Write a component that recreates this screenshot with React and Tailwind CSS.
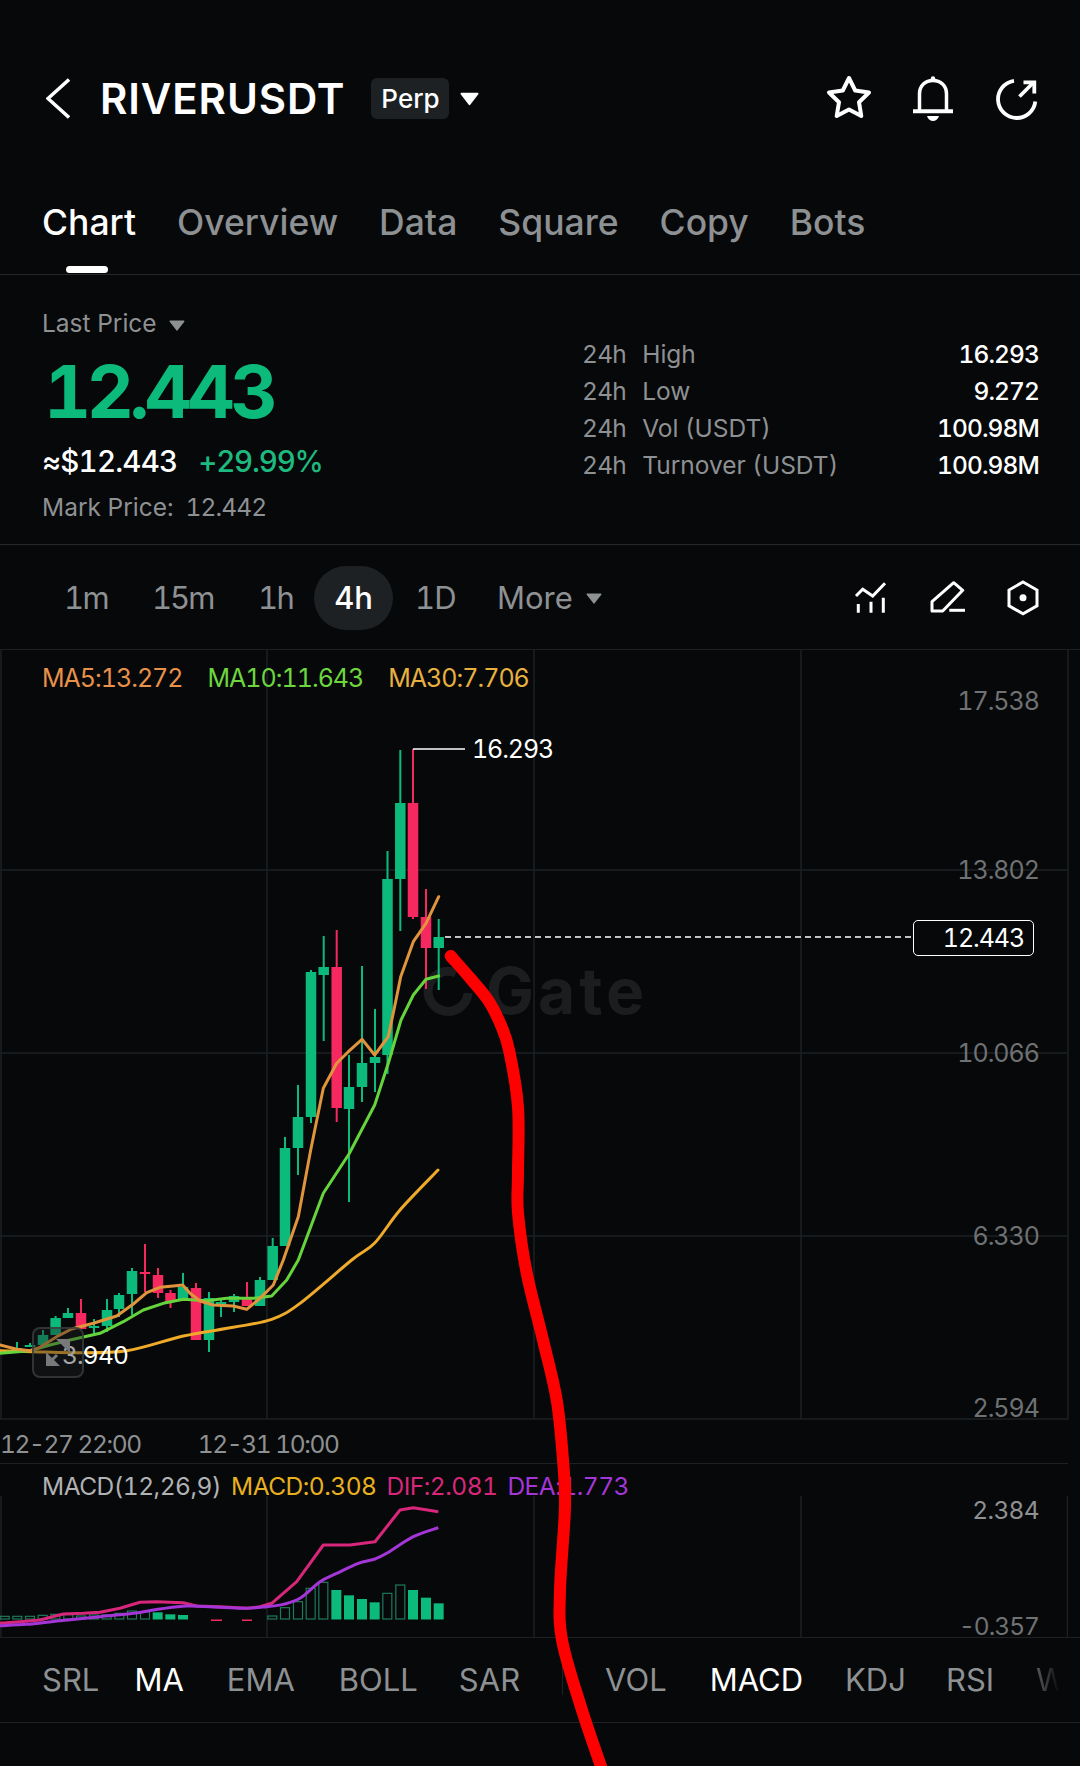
import React from "react";

const GREEN = "#0cbb7c";
const RED = "#f5285f";

// [x, wickTop, wickBottom, bodyTop, bodyBottom, color]
const candles = [
  [438.7, 919, 990, 937, 948, "g"], [426, 889, 989, 917, 948, "r"], [413, 749, 919, 803, 917, "r"],
  [400.3, 750, 931, 803, 879, "g"], [387.5, 851, 1074, 879, 1055, "g"], [375, 1009, 1092, 1057, 1063, "g"],
  [362, 966, 1102, 1063, 1087, "g"], [349, 1055, 1202, 1087, 1109, "g"], [336.7, 930, 1122, 967, 1108, "r"],
  [323.7, 936, 1041, 967, 975, "g"], [311, 970, 1123, 972, 1117, "g"], [298, 1085, 1175, 1117, 1148, "g"],
  [285, 1137, 1246, 1148, 1246, "g"], [272.7, 1238, 1280, 1246, 1280, "g"], [260, 1277, 1306, 1280, 1306, "g"],
  [247, 1282, 1306, 1298, 1306, "r"], [234, 1294, 1312, 1296, 1302, "g"], [221, 1300, 1317, 1302, 1305, "g"],
  [209, 1292, 1352, 1298, 1340, "g"], [196, 1283, 1340, 1288, 1340, "r"], [183, 1273, 1300, 1287, 1300, "g"],
  [170.5, 1290, 1308, 1293, 1302, "r"], [158, 1268, 1298, 1275, 1293, "r"], [145, 1244, 1292, 1272, 1274, "r"],
  [132, 1268, 1315, 1271, 1294, "g"], [119, 1293, 1317, 1295, 1309, "g"], [107, 1299, 1332, 1310, 1326, "g"],
  [94, 1319, 1334, 1326, 1328, "g"], [81, 1299, 1329, 1313, 1329, "r"], [68, 1308, 1318, 1313, 1318, "g"],
  [55.6, 1316, 1335, 1318, 1335, "g"], [43, 1330, 1345, 1335, 1345, "g"], [30, 1343, 1347, 1345, 1347, "g"],
  [17, 1342, 1352, 1348, 1350, "g"],
];

const pts6 = (a) => a.map(([x, y]) => [x / 3, 1230 + y / 3]);
const pts5 = (a) => a.map(([x, y]) => [240 + x / 3, 1000 + y / 3]);
const pts4 = (a) => a.map(([x, y]) => [300 + x / 3, 720 + y / 3]);
const toStr = (a) => a.map(([x, y]) => `${x.toFixed(1)},${y.toFixed(1)}`).join(" ");

const smooth = (p) => {
  let d = `M${p[0][0]} ${p[0][1]}`;
  for (let i = 0; i < p.length - 1; i++) {
    const a = p[Math.max(i - 1, 0)], b = p[i], c = p[i + 1], e = p[Math.min(i + 2, p.length - 1)];
    d += ` C${(b[0] + (c[0] - a[0]) / 6).toFixed(1)} ${(b[1] + (c[1] - a[1]) / 6).toFixed(1)} ${(c[0] - (e[0] - b[0]) / 6).toFixed(1)} ${(c[1] - (e[1] - b[1]) / 6).toFixed(1)} ${c[0]} ${c[1]}`;
  }
  return d;
};

const ma5 = [
  ...pts6([[0, 345], [50, 358], [90, 362], [120, 352], [170, 320], [215, 297], [280, 280], [350, 258], [400, 222], [440, 188], [480, 172], [520, 168], [548, 165], [570, 190], [600, 213], [640, 225], [700, 228], [740, 238], [780, 205], [820, 165]]),
  ...pts5([[130, 780], [175, 650], [212, 450], [250, 265], [290, 190], [325, 155], [366, 118], [404, 165], [445, 110], [468, 0]]),
  ...pts4([[302, 770], [340, 665], [378, 610], [416, 530]]),
];
const ma10 = [
  ...pts6([[0, 370], [90, 362], [150, 345], [210, 330], [300, 310], [370, 275], [430, 240], [490, 220], [550, 208], [620, 212], [680, 205], [760, 205], [815, 198], [860, 150]]),
  ...pts5([[175, 780], [250, 580], [327, 462], [404, 315], [445, 190], [483, 60]]),
  ...pts4([[340, 825], [378, 778], [416, 768]]),
];
const ma30 = [
  ...pts6([[0, 362], [100, 365], [220, 368], [380, 362], [550, 318], [700, 292], [815, 268], [900, 220]]),
  [351.7, 1260], [374.7, 1243], [400, 1210], [438, 1170],
];

const macdBars = [
  [1316, 490, 1], [1278, 473, 1], [1239, 450, 1], [1201, 435, 0], [1162, 460, 0], [1124, 487, 1], [1086, 477, 1], [1047, 466, 1], [1009, 450, 1],
  [970, 427, 0], [932, 445, 0], [894, 485, 0], [855, 503, 0], [817, 528, 0], [549, 525, 1], [511, 523, 1], [473, 517, 1], [435, 515, 0], [396, 513, 0],
  [358, 520, 0], [320, 525, 0], [282, 525, 0], [243, 528, 0], [205, 524, 0], [166, 523, 0], [128, 526, 0], [90, 529, 0], [52, 529, 0], [14, 529, 0],
];
const dif = [[0, 550], [60, 545], [120, 540], [190, 522], [250, 520], [300, 517], [360, 505], [420, 487], [470, 485], [550, 488], [590, 498], [660, 500], [740, 505], [780, 500], [815, 490], [890, 425], [930, 370], [970, 315], [1050, 315], [1125, 305], [1200, 210], [1240, 203], [1315, 215]];
const dea = [[0, 557], [80, 553], [180, 542], [300, 530], [400, 520], [480, 507], [560, 498], [660, 502], [740, 505], [800, 500], [850, 493], [900, 475], [960, 425], [1010, 400], [1075, 370], [1125, 357], [1160, 340], [1240, 290], [1315, 263]];
const z7 = (a) => a.map(([x, y]) => [x / 3, 1440 + y / 3]);

const redPath = [[450.7, 956], [470, 978], [488, 1000], [500, 1023], [509, 1050], [518, 1107], [518, 1173], [518, 1213], [526.7, 1273], [543, 1340], [556.7, 1400], [563, 1460], [565, 1507], [560, 1590], [562, 1640], [581, 1707], [603, 1772]];

const Tri = ({ w, h, color, className = "" }) => (
  <svg width={w} height={h} viewBox="0 0 20 14" className={className}>
    <path d="M1.5 1.5H18.500L10 12.500Z" fill={color} stroke={color} strokeWidth="2" strokeLinejoin="round" />
  </svg>
);

const HeaderIcons = () => (
  <div className="flex items-center">
    <svg width="48" height="48" viewBox="824.500 77 48 48" fill="none" stroke="#fff" strokeWidth="4" strokeLinejoin="round">
      <path d="M848.500 80L854.700 92.500L868.500 94.500L858.500 104.200L860.800 118L848.500 111.500L836.200 118L838.500 104.200L828.500 94.500L842.300 92.500Z" />
    </svg>
    <svg width="44" height="48" viewBox="910.500 75 44 48" fill="none" stroke="#fff" className="ml-[38px]">
      <path d="M919 111V94C919 85.500 925 80.500 932.500 80.500C940 80.500 946 85.500 946 94V111" strokeWidth="3.500" />
      <path d="M912.500 111.300H952.500" strokeWidth="4" />
      <circle cx="932.500" cy="78.500" r="2.200" fill="#fff" stroke="none" />
      <path d="M926.500 116H938.500C937.500 119.500 935 121 932.500 121C930 121 927.500 119.500 926.500 116Z" fill="#fff" stroke="none" />
    </svg>
    <svg width="44" height="48" viewBox="996 75 44 48" fill="none" stroke="#fff" strokeWidth="3.800" className="ml-[41px]">
      <path d="M1035.300 101.500A18.700 18.700 0 1 1 1014 80.800" />
      <path d="M1019.500 96.500L1033 83" />
      <path d="M1023.500 82.300H1034.300V93.500" />
    </svg>
  </div>
);

const ToolIcons = () => (
  <div className="flex items-center">
    <svg width="34" height="34" viewBox="853 581 34 34" fill="none" stroke="#fff" strokeWidth="3">
      <path d="M855 596L861.700 589.300L871.700 596L884 583.300" />
      <path d="M857.300 604V612.700M870 601.700V612.700M882.300 597.700V612.700" />
    </svg>
    <svg width="36" height="34" viewBox="929 580 36 34" fill="none" stroke="#fff" strokeWidth="3" strokeLinejoin="round" className="ml-[42px]">
      <path d="M952.700 581.700L961.700 589.300L941.700 610H931V600.700Z" />
      <path d="M948.300 609.300H964" />
    </svg>
    <svg width="34" height="36" viewBox="1005 579.500 34 36" fill="none" stroke="#fff" strokeWidth="3" className="ml-[40px]">
      <path d="M1022 581.500L1036 589.500V605.300L1022 613.300L1008 605.300V589.500Z" />
      <circle cx="1022" cy="597.300" r="3.500" fill="#fff" stroke="none" />
    </svg>
  </div>
);

const stats = [
  ["High", "16.293"], ["Low", "9.272"], ["Vol (USDT)", "100.98M"], ["Turnover (USDT)", "100.98M"],
];
const yLabels = [
  ["17.538", "top-[35px]"], ["13.802", "top-[204px]"], ["10.066", "top-[387px]"], ["6.330", "top-[570px]"], ["2.594", "top-[742px]"],
];

export default function App() {
  return (
    <div className="relative w-[1080px] h-[1766px] overflow-hidden bg-[#060809] text-white tabular-nums font-['Inter','Liberation_Sans',sans-serif]">
      {/* Header */}
      <header className="h-[176px] pt-[78px] pl-[46px] pr-[40px] flex items-start justify-between">
        <div className="flex items-center h-[41px]">
          <svg width="24" height="42" viewBox="45 78 24 42" fill="none" stroke="#fff" strokeWidth="3.500">
            <path d="M68 79.500L47 98.500L68 117.500" />
          </svg>
          <span className="ml-[30px] text-[42px] leading-none font-semibold tracking-[0.9px]">RIVERUSDT</span>
          <span className="ml-[26px] h-[41px] w-[78px] rounded-[6px] bg-[#1e2123] flex items-center justify-center text-[26px] font-medium">Perp</span>
          <Tri w={19} h={14} color="#fff" className="ml-[11px]" />
        </div>
        <div className="-mt-[3px]"><HeaderIcons /></div>
      </header>

      {/* Tabs */}
      <nav className="h-[99px] border-b border-[#25282a] pl-[42px] flex items-start gap-[41px] pt-[24px] text-[35.500px] leading-[46px] font-medium text-[#8e9193]">
        <span className="relative text-white">
          Chart
          <span className="absolute left-[24px] top-[66px] w-[42px] h-[7px] rounded-full bg-white"></span>
        </span>
        <span>Overview</span>
        <span>Data</span>
        <span>Square</span>
        <span>Copy</span>
        <span>Bots</span>
      </nav>

      {/* Price panel */}
      <section className="h-[270px] border-b border-[#25282a] pl-[42px] pr-[41px] flex justify-between">
        <div className="pt-[32px]">
          <div className="flex items-center text-[24.500px] leading-[32px] text-[#8e9193]">
            Last Price
            <Tri w={16} h={11} color="#8e9193" className="ml-[12px] mt-[5px]" />
          </div>
          <div className="mt-[15px] ml-[2px] text-[73px] leading-[76px] font-bold tracking-[-4.400px] text-[#0cbb7c]">12.443</div>
          <div className="mt-[12px] flex items-baseline gap-[21px] text-[29.500px] leading-[38px] font-medium">
            <span className="tracking-[-0.8px]">≈$12.443</span>
            <span className="text-[#1eb97f] tracking-[-1.200px]">+29.99%</span>
          </div>
          <div className="mt-[11px] text-[24.500px] leading-[32px] text-[#8e9193]">
            Mark Price:<span className="ml-[12px] tracking-[-0.9px]">12.442</span>
          </div>
        </div>
        <div className="w-[457px] pt-[61px] text-[24.500px] leading-[37px]">
          {stats.map(([k, v]) => (
            <div key={k} className="flex justify-between">
              <span className="text-[#8e9193]"><span className="tracking-[-0.7px]">24h</span><span className="ml-[16px]">{k}</span></span>
              <span className="font-medium tracking-[-0.9px]">{v}</span>
            </div>
          ))}
        </div>
      </section>

      {/* Timeframe bar */}
      <section className="h-[105px] border-b border-[#1e2123] pl-[64px] pr-[40px] pt-[2px] flex items-center justify-between">
        <div className="flex items-center text-[31px] text-[#8e9193]">
          <span className="w-[44px] text-center tracking-[-1.500px]">1m</span>
          <span className="ml-[44px] w-[61px] text-center tracking-[-2px]">15m</span>
          <span className="ml-[45px] w-[34px] text-center tracking-[-1.500px]">1h</span>
          <span className="ml-[22px] w-[79px] h-[64px] rounded-full bg-[#1e2123] text-white font-medium flex items-center justify-center">4h</span>
          <span className="ml-[22px] w-[39px] text-center tracking-[-0.8px]">1D</span>
          <span className="ml-[43px]">More</span>
          <Tri w={16} h={11} color="#8e9193" className="ml-[13px]" />
        </div>
        <ToolIcons />
      </section>

      {/* Main chart */}
      <section className="relative h-[813px]">
        <div className="absolute left-[42px] right-0 top-[12px] flex gap-[25px] text-[25px] leading-[32px] tracking-[-1px]">
          <span className="text-[#e8914a]">MA5:13.272</span>
          <span className="text-[#6cd63f]">MA10:11.643</span>
          <span className="text-[#e8b040]">MA30:7.706</span>
        </div>
        <svg width="1080" height="813" viewBox="0 650 1080 813" className="block">
          <g stroke="#1e2123" strokeWidth="1.500">
            <path d="M0 870H1068M0 1053H1068M0 1236H1068M0 1419H1068" />
            <path d="M1 650V1419M267 650V1419M534 650V1419M801 650V1419M1068 650V1419" />
          </g>
          <path d="M456 973A20 20 0 1 0 468 993" fill="none" stroke="#1b1d1f" strokeWidth="9" />
          <text x="486" y="1014" fontSize="64" fontWeight="700" letterSpacing="4" fill="#1b1d1f" fontFamily="Inter">Gate</text>
          {candles.map(([x, t, b, bt, bb, c], i) => {
            const col = c === "g" ? GREEN : RED;
            return (
              <g key={i} fill={col}>
                <rect x={x - 1} y={t} width="2" height={b - t} />
                <rect x={x - 5.250} y={bt} width="10.500" height={bb - bt} />
              </g>
            );
          })}
          <g fill="none" strokeWidth="3" strokeLinejoin="round" strokeLinecap="round">
            <path d={smooth(ma30)} stroke="#efaa2a" />
            <polyline points={toStr(ma10)} stroke="#66d43c" />
            <polyline points={toStr(ma5)} stroke="#e0943c" />
          </g>
          <path d="M413 749H465" stroke="#fff" strokeWidth="1.500" fill="none" />
          <path d="M445 937H912" stroke="#fff" strokeWidth="1.500" strokeDasharray="6 4" fill="none" />
        </svg>

        {/* Overlaid labels */}
        <span className="absolute left-[472px] top-[83px] text-[25px] leading-[32px] tracking-[-1.100px]">16.293</span>
        <span className="absolute left-[62px] top-[689px] text-[24.500px] leading-[32px] tracking-[-0.8px]">3.940</span>
        {yLabels.map(([t, top]) => (
          <span key={t} className={`absolute right-[41px] ${top} text-[25px] leading-[32px] tracking-[-1px] text-[#6f7274]`}>{t}</span>
        ))}
        <span className="absolute left-[913px] top-[270px] w-[121px] h-[36px] rounded-[5px] border border-white bg-[#060809] text-[25px] tracking-[-1.100px] flex items-center justify-end pr-[9px]"><span className="relative top-[1px]">12.443</span></span>
        <div className="absolute left-[32px] top-[677px] w-[52px] h-[51px] rounded-[8px] border-[2px] border-[#3a3d3f]/80 bg-[#1e2123]/40 flex items-center justify-center">
          <svg width="36" height="36" viewBox="0 0 36 36" fill="none">
            <path d="M6 31V17L11 22L16 27L20 31Z" fill="#77797b" />
            <path d="M10 27L17 20" stroke="#77797b" strokeWidth="3" />
            <path d="M30 4H16L30 18Z" fill="#77797b" />
          </svg>
        </div>
        <div className="absolute left-0 top-[778px] w-[1068px] flex text-[24.500px] leading-[32px] tracking-[-1.400px] text-[#8e9193]">
          <span>12-27 22:00</span>
          <span className="ml-[57px]">12-31 10:00</span>
        </div>
      </section>

      {/* MACD */}
      <section className="relative h-[174px] border-t border-[#1e2123] w-[1068px]">
        <div className="absolute left-[42px] top-[6px] flex gap-[10px] text-[24.500px] leading-[32px] tracking-[-0.5px]">
          <span className="text-[#b0b2b4]">MACD(12,26,9)</span>
          <span className="text-[#e8b020]">MACD:0.308</span>
          <span className="text-[#d8277a]">DIF:2.081</span>
          <span className="text-[#a436d8]">DEA:1.773</span>
        </div>
        <svg width="1068" height="173" viewBox="0 1464 1068 173" className="block">
          <path d="M1 1496V1637M267 1496V1637M534 1496V1637M801 1496V1637M1067.500 1496V1637" stroke="#1e2123" strokeWidth="1.500" />
          {macdBars.map(([zx, top, filled], i) => {
            const x = zx / 3, y = 1440 + top / 3;
            return filled ? (
              <rect key={i} x={x - 5} y={y} width="10" height={1619.500 - y} fill={GREEN} />
            ) : (
              <rect key={i} x={x - 4.500} y={y} width="9" height={1619 - y} fill="none" stroke="#1f7a5a" strokeWidth="1.200" />
            );
          })}
          <rect x="211" y="1619.500" width="11" height="1.500" fill={RED} />
          <rect x="242" y="1619.500" width="10" height="1.500" fill={RED} />
          <polyline points={toStr(z7(dif))} fill="none" stroke="#d8277a" strokeWidth="3" strokeLinejoin="round" />
          <path d={smooth(z7(dea))} fill="none" stroke="#a436d8" strokeWidth="3" />
        </svg>
        <span className="absolute right-[29px] top-[30px] text-[24.500px] leading-[32px] tracking-[-0.7px] text-[#8e9193]">2.384</span>
        <span className="absolute right-[29px] top-[146px] text-[24.500px] leading-[32px] tracking-[-1px] text-[#6f7274]">-0.357</span>
      </section>

      {/* Indicator tabs */}
      <nav className="relative h-[86px] border-y border-[#1e2123] pl-[42px] flex items-center text-[31px] text-[#8e9193]">
        <span>SRL</span>
        <span className="ml-[35px] text-white">MA</span>
        <span className="ml-[43px]">EMA</span>
        <span className="ml-[44px]">BOLL</span>
        <span className="ml-[41px]">SAR</span>
        <span className="ml-[42px] w-px h-[30px] bg-[#1e2123]"></span>
        <span className="ml-[42px]">VOL</span>
        <span className="ml-[43px] text-white">MACD</span>
        <span className="ml-[42px]">KDJ</span>
        <span className="ml-[40px]">RSI</span>
        <span className="ml-[42px] bg-[linear-gradient(90deg,#555759_0%,#333537_40%,#060809_75%)] bg-clip-text text-transparent">W</span>
      </nav>

      {/* Hand-drawn red annotation */}
      <svg width="1080" height="1766" viewBox="0 0 1080 1766" className="absolute inset-0 pointer-events-none">
        <path d={smooth(redPath)} fill="none" stroke="#ff0000" strokeWidth="12" strokeLinecap="round" />
      </svg>
    </div>
  );
}
